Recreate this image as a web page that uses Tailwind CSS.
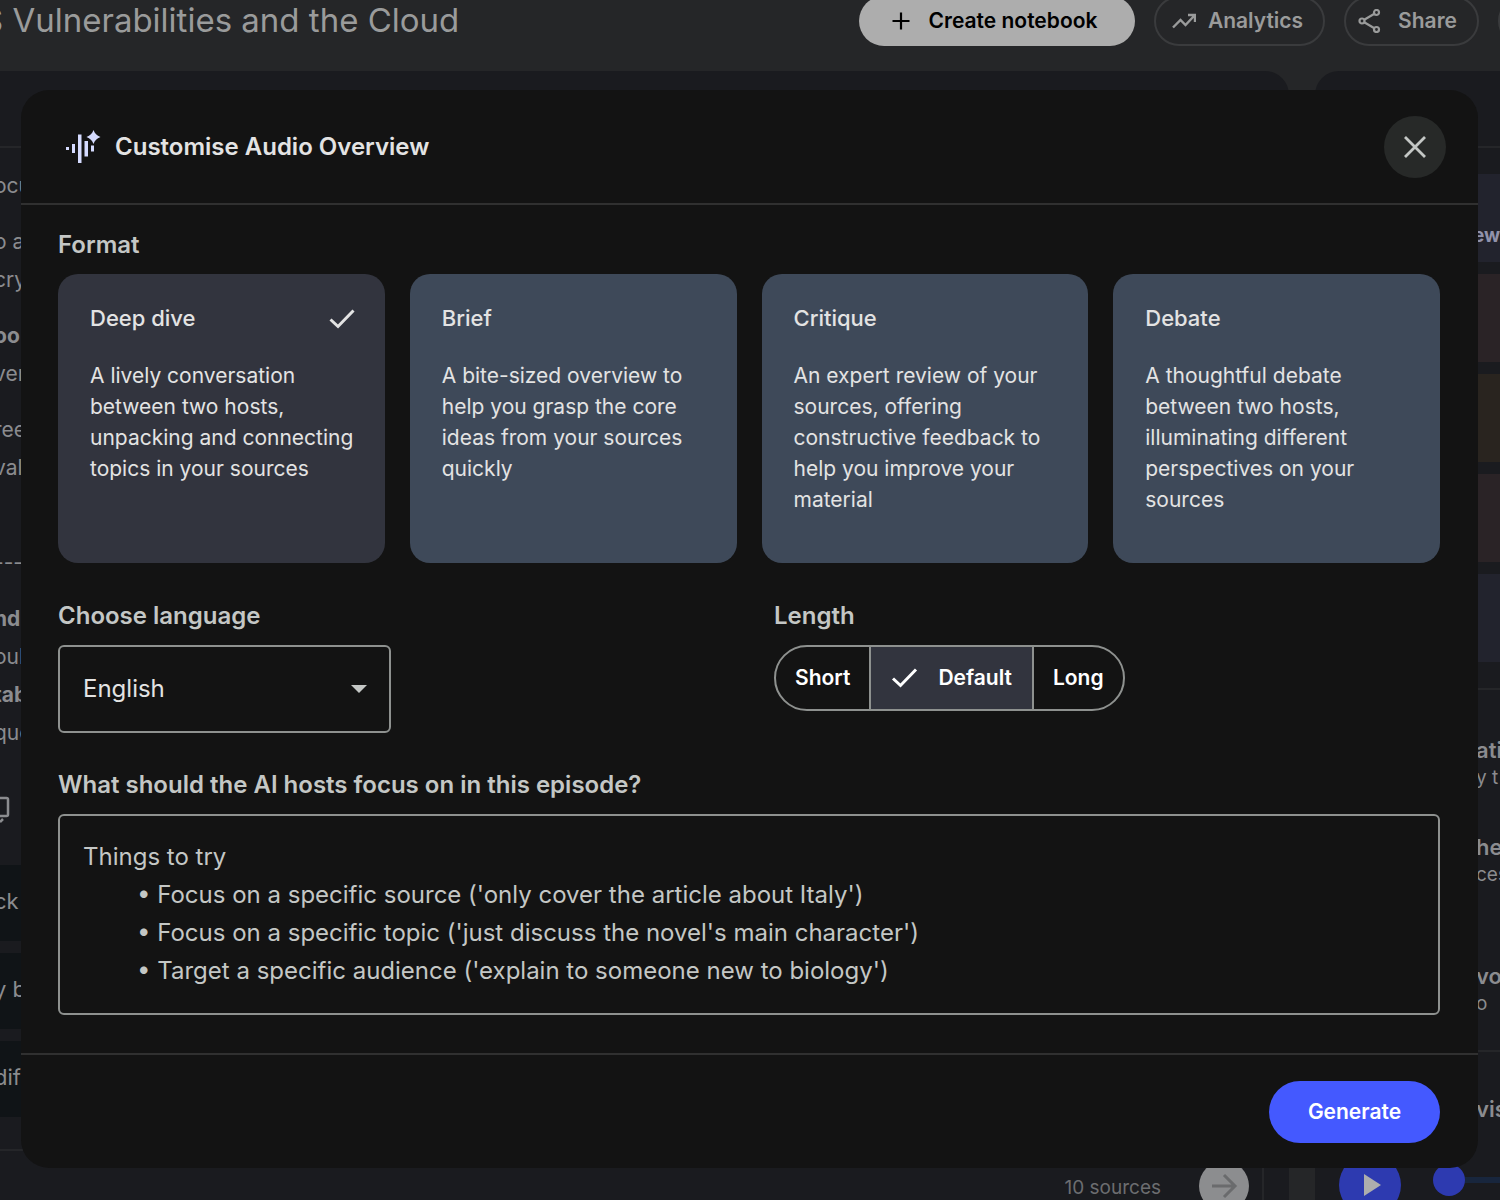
<!DOCTYPE html>
<html lang="en-GB">

<head>
  <meta charset="UTF-8">
  <meta name="viewport" content="width=device-width, initial-scale=1.0">
  <title>Customise Audio Overview</title>
  <script src="https://cdn.jsdelivr.net/npm/@tailwindcss/browser@4"></script>
</head>

<body class="h-screen overflow-hidden flex flex-col bg-[#252628] font-[Inter,Roboto,sans-serif] text-[#8b8c8f]">

  <!-- Notebook header -->
  <header class="-mt-[30px] h-[101px] shrink-0 flex items-center justify-between overflow-hidden">
    <h1 class="-ml-[18px] text-[33px] whitespace-nowrap text-[#9a9b9b]">S Vulnerabilities and the Cloud</h1>
    <div class="flex gap-[19px] -mr-12 text-[21px] font-semibold">
      <button class="h-[50px] w-[276px] pr-2 rounded-full bg-[#adadad] text-black flex items-center justify-center gap-4">
        <svg class="size-6" viewBox="0 0 24 24" fill="none" stroke="currentColor" stroke-width="2.200"><path d="M12 3.500v17M3.500 12h17" /></svg>
        Create notebook
      </button>
      <button class="h-[50px] w-[171px] pr-1 rounded-full border-2 border-[#3a3b3d] text-[#9a9b9b] flex items-center justify-center gap-3">
        <svg class="size-6" viewBox="0 0 24 24" fill="none" stroke="currentColor" stroke-width="2.400"><path d="M1 18.500l7.500-7.500 5 5L22 7M16 6h7v7" /></svg>
        Analytics
      </button>
      <button class="h-[50px] w-[135px] pr-2 rounded-full border-2 border-[#3a3b3d] text-[#9a9b9b] flex items-center justify-center gap-4">
        <svg class="size-6" viewBox="0 0 24 24" fill="none" stroke="currentColor" stroke-width="2.200"><circle cx="4" cy="12" r="2.500" /><circle cx="18.500" cy="3.500" r="2.500" /><circle cx="18.500" cy="20.500" r="2.500" /><path d="M6.200 10.700l10.200-6M6.200 13.300l10.200 6" /></svg>
        Share
      </button>
      <button class="h-[50px] w-[50px] rounded-full border-2 border-[#3a3b3d]" aria-label="Settings"></button>
    </div>
  </header>

  <main class="flex-1 min-h-0 flex gap-[26px]">

    <!-- Chat -->
    <section class="flex-1 min-w-0 flex flex-col overflow-hidden rounded-tr-3xl bg-[#1a1b1f]">
      <div class="h-[77px] shrink-0 border-b-2 border-[#252629]"></div>
      <div class="-ml-[6px] pt-[19px] text-[21px] leading-[38px] space-y-[18px] whitespace-nowrap">
        <p>ocu</p>
        <p>o a<br>cry</p>
        <p><b>oo</b><br>ver</p>
        <p>ree<br>vall</p>
        <p class="pt-[39px]">----</p>
        <p><b>nd</b><br>oul<br><b>tab</b><br>que</p>
      </div>
      <svg class="mt-[43px] w-[10px] h-[30px] shrink-0" viewBox="0 0 10 30" fill="none" stroke="currentColor" stroke-width="2.500"><path d="M0 3h6.500a1.500 1.500 0 0 1 1.500 1.500v15a1.500 1.500 0 0 1-1.500 1.500H0M0 27l3-3" /></svg>
      <div class="mt-[40px] shrink-0 flex flex-col gap-3 text-[22px]">
        <button class="h-[76px] w-1/2 -ml-[6px] pb-1 text-left bg-[#101417]">ck</button>
        <button class="h-[76px] w-1/2 -ml-[6px] pb-1 text-left bg-[#101417]">y b</button>
        <button class="h-[76px] w-1/2 -ml-[6px] pb-1 text-left bg-[#101417]">dif</button>
      </div>
      <div class="mt-8 mr-[25px] h-[100px] shrink-0 border-t-2 border-r-2 border-[#252629] flex justify-end gap-[38px] pr-[13px] pt-[10px] text-[19px] text-[#6c6d70]">
        <span class="h-[50px] leading-[54px]">10 sources</span>
        <button class="size-[50px] rounded-full bg-[#8c8d8f] text-[#6a6b6d] flex items-center justify-center" aria-label="Send">
          <svg class="size-7" viewBox="0 0 28 28" fill="none" stroke="currentColor" stroke-width="3"><path d="M2 14h23M14 3l11 11-11 11" /></svg>
        </button>
      </div>
    </section>

    <!-- Studio -->
    <section class="w-[185px] shrink-0 flex flex-col overflow-hidden rounded-tl-3xl bg-[#1a1b1f] whitespace-nowrap">
      <div class="h-[77px] shrink-0 border-b-2 border-[#252629]"></div>
      <div class="pt-[26px] pl-6 grid auto-rows-[88px] gap-3 text-[19px] leading-7 font-bold text-[#9092ab]">
        <div class="bg-[#22232d] pt-12 pl-[134px]">ew</div>
        <div class="bg-[#2a2326]"></div>
        <div class="bg-[#29241f]"></div>
        <div class="bg-[#2a2326]"></div>
        <div class="bg-[#22232d]"></div>
      </div>
      <div class="mt-[26px] pt-[46px] pl-[161px] h-[364px] shrink-0 border-y-2 border-[#252629] text-[19px] leading-7">
        <p class="text-[22px] font-semibold">ati</p>
        <p>y t</p>
        <p class="mt-[41px] text-[22px] font-semibold">he</p>
        <p>ces</p>
        <p class="mt-[73px] text-[22px] font-semibold">vol</p>
        <p>o</p>
      </div>
      <p class="pt-[43px] pl-[161px] text-[22px] leading-7 font-semibold">vis</p>
      <div class="mt-[31px] shrink-0 pl-6 flex items-start gap-8">
        <button class="size-[62px] shrink-0 rounded-full bg-[#2d3ab0] flex items-center justify-center" aria-label="Play">
          <svg class="size-6" viewBox="0 0 24 24" fill="#adadad"><path d="M6 1l17 11L6 23z" /></svg>
        </button>
        <div class="mt-[10px] shrink-0 flex items-center">
          <span class="size-8 rounded-full bg-[#2d3ab0]"></span>
          <span class="h-[6px] w-20 bg-[#18263d]"></span>
        </div>
      </div>
    </section>
  </main>

  <!-- Dialog -->
  <div class="fixed inset-0 pt-[90px] pb-8 pl-[21px] pr-[22px] flex">
    <form role="dialog" aria-labelledby="dialog-title" class="flex-1 flex flex-col rounded-[28px] bg-[#131313] text-[#e3e3e3]">

      <div class="h-[115px] shrink-0 flex items-center pl-[44px] pr-8 border-b-2 border-[#303030]">
        <svg class="w-[36px] h-[34px]" viewBox="0 0 36 34" fill="#d5dbff">
          <path d="M1 17h3v3H1zM7 14h3v9H7zM13 4.500h3.500v28.500H13zM19.500 11H23v15.500h-3.500zM26 15.500h3v6h-3z" />
          <path d="M28.500 0c1.400 3.600 3.200 5.500 7 7-3.800 1.500-5.600 3.400-7 7-1.400-3.600-3.200-5.500-7-7 3.800-1.500 5.600-3.400 7-7z" />
        </svg>
        <h2 id="dialog-title" class="ml-[14px] text-2xl font-semibold">Customise Audio Overview</h2>
        <button type="button" class="ml-auto size-[62px] rounded-full bg-[#272928] flex items-center justify-center text-[#c4c7c5]" aria-label="Close">
          <svg class="size-6" viewBox="0 0 24 24" fill="none" stroke="currentColor" stroke-width="2.800"><path d="M2 2l20 20M22 2L2 22" /></svg>
        </button>
      </div>

      <div class="flex-1 pl-[37px] pr-[38px] pt-6 text-[#c4c7c5]">
        <h3 id="format-label" class="text-2xl leading-8 font-semibold">Format</h3>
        <div role="radiogroup" aria-labelledby="format-label" class="mt-[13px] grid grid-cols-4 gap-[25px] text-[21px] leading-[31px] text-[#e3e3e3]">
          <label class="min-h-[289px] rounded-[20px] bg-[#32343e] pl-8 pr-[30px] pt-[29px]">
            <input type="radio" name="format" class="sr-only" checked>
            <span class="flex items-center justify-between text-[22px] font-medium">Deep dive
              <svg class="w-[26px] h-[20px]" viewBox="0 0 26 20" fill="none" stroke="currentColor" stroke-width="3"><path d="M1.500 10.500l7.500 7L24.500 1.500" /></svg>
            </span>
            <span class="block mt-[26px]">A lively conversation between two hosts, unpacking and connecting topics in your sources</span>
          </label>
          <label class="min-h-[289px] rounded-[20px] bg-[#3e4959] pl-8 pr-[30px] pt-[29px]">
            <input type="radio" name="format" class="sr-only">
            <span class="block text-[22px] font-medium">Brief</span>
            <span class="block mt-[26px]">A bite-sized overview to help you grasp the core ideas from your sources quickly</span>
          </label>
          <label class="min-h-[289px] rounded-[20px] bg-[#3e4959] pl-8 pr-[30px] pt-[29px]">
            <input type="radio" name="format" class="sr-only">
            <span class="block text-[22px] font-medium">Critique</span>
            <span class="block mt-[26px]">An expert review of your sources, offering constructive feedback to help you improve your material</span>
          </label>
          <label class="min-h-[289px] rounded-[20px] bg-[#3e4959] pl-8 pr-[30px] pt-[29px]">
            <input type="radio" name="format" class="sr-only">
            <span class="block text-[22px] font-medium">Debate</span>
            <span class="block mt-[26px]">A thoughtful debate between two hosts, illuminating different perspectives on your sources</span>
          </label>
        </div>

        <div class="mt-[37px] grid grid-cols-2 gap-[50px]">
          <div>
            <label for="language" class="block text-2xl leading-8 font-semibold">Choose language</label>
            <div class="relative mt-[13px] w-[333px]">
              <select id="language" class="appearance-none h-[88px] w-full rounded-md border-2 border-[#8e918f] bg-transparent pl-[23px] pr-16 text-2xl text-[#e3e3e3]">
                <option>English</option>
              </select>
              <svg class="absolute right-6 top-10 w-4 h-2 pointer-events-none" viewBox="0 0 16 8" fill="currentColor"><path d="M0 0h16L8 8z" /></svg>
            </div>
          </div>
          <div>
            <h3 id="length-label" class="text-2xl leading-8 font-semibold">Length</h3>
            <div role="radiogroup" aria-labelledby="length-label" class="mt-[13px] inline-flex h-[66px] overflow-hidden rounded-full border-2 border-[#8e918f] divide-x-2 divide-[#8e918f] text-[21px] font-semibold text-white">
              <label class="flex items-center px-[19px]">
                <input type="radio" name="length" class="sr-only">Short
              </label>
              <label class="flex items-center gap-5 px-5 bg-[#32343e]">
                <input type="radio" name="length" class="sr-only" checked>
                <svg class="w-[27px] h-[20px]" viewBox="0 0 26 20" fill="none" stroke="currentColor" stroke-width="3"><path d="M1.500 10.500l7.500 7L24.500 1.500" /></svg>
                Default
              </label>
              <label class="flex items-center px-[19px]">
                <input type="radio" name="length" class="sr-only">Long
              </label>
            </div>
          </div>
        </div>

        <label for="focus" class="block mt-9 text-2xl leading-8 font-semibold">What should the AI hosts focus on in this episode?</label>
        <textarea id="focus" class="block mt-[13px] w-full h-[201px] resize-none rounded-md border-2 border-[#8e918f] bg-transparent px-[23px] py-[22px] text-2xl leading-[38px] placeholder:text-[#c4c7c5]" placeholder="Things to try&#10;        • Focus on a specific source ('only cover the article about Italy')&#10;        • Focus on a specific topic ('just discuss the novel's main character')&#10;        • Target a specific audience ('explain to someone new to biology')"></textarea>
      </div>

      <div class="h-[115px] shrink-0 flex items-center justify-end px-[38px] border-t-2 border-[#303030]">
        <button type="submit" class="h-[62px] w-[171px] rounded-full bg-[#4459ff] text-[21px] font-semibold text-white">Generate</button>
      </div>
    </form>
  </div>

</body>

</html>
